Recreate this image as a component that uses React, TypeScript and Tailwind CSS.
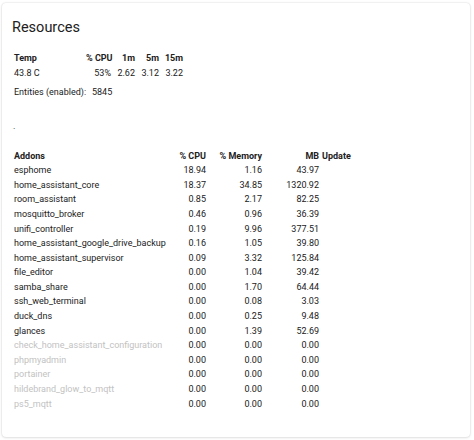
import React from "react";

type Row = { name: string; cpu: string; mem: string; mb: string; off?: boolean };

const rows: Row[] = [
  { name: "esphome", cpu: "18.94", mem: "1.16", mb: "43.97" },
  { name: "home_assistant_core", cpu: "18.37", mem: "34.85", mb: "1320.92" },
  { name: "room_assistant", cpu: "0.85", mem: "2.17", mb: "82.25" },
  { name: "mosquitto_broker", cpu: "0.46", mem: "0.96", mb: "36.39" },
  { name: "unifi_controller", cpu: "0.19", mem: "9.96", mb: "377.51" },
  { name: "home_assistant_google_drive_backup", cpu: "0.16", mem: "1.05", mb: "39.80" },
  { name: "home_assistant_supervisor", cpu: "0.09", mem: "3.32", mb: "125.84" },
  { name: "file_editor", cpu: "0.00", mem: "1.04", mb: "39.42" },
  { name: "samba_share", cpu: "0.00", mem: "1.70", mb: "64.44" },
  { name: "ssh_web_terminal", cpu: "0.00", mem: "0.08", mb: "3.03" },
  { name: "duck_dns", cpu: "0.00", mem: "0.25", mb: "9.48" },
  { name: "glances", cpu: "0.00", mem: "1.39", mb: "52.69" },
  { name: "check_home_assistant_configuration", cpu: "0.00", mem: "0.00", mb: "0.00", off: true },
  { name: "phpmyadmin", cpu: "0.00", mem: "0.00", mb: "0.00", off: true },
  { name: "portainer", cpu: "0.00", mem: "0.00", mb: "0.00", off: true },
  { name: "hildebrand_glow_to_mqtt", cpu: "0.00", mem: "0.00", mb: "0.00", off: true },
  { name: "ps5_mqtt", cpu: "0.00", mem: "0.00", mb: "0.00", off: true },
];

export default function App() {
  return (
    <div
      className="w-[474px] h-[440px] bg-white pl-[2px] pr-[4px] pt-[3px] text-[#212121]"
      style={{ fontFamily: "Roboto, 'Liberation Sans', sans-serif" }}
    >
      <div className="rounded-[4px] bg-white shadow-[0_0_2px_rgba(0,0,0,0.18),0_1px_3px_rgba(0,0,0,0.08)] h-[434px] pt-[15px] px-[12px]">
        <div className="h-[20px] leading-[20px] text-[14.5px] -ml-[2px]">Resources</div>

        <div className="mt-[13.5px] text-[9px] whitespace-nowrap">
          <div className="grid grid-cols-[72px_25px_24px_24px_24px] auto-rows-[15px] items-center">
            <div className="font-bold">Temp</div>
            <div className="font-bold text-right">% CPU</div>
            <div className="font-bold text-right">1m</div>
            <div className="font-bold text-right">5m</div>
            <div className="font-bold text-right">15m</div>
            <div>43.8 C</div>
            <div className="text-right">53%</div>
            <div className="text-right">2.62</div>
            <div className="text-right">3.12</div>
            <div className="text-right">3.22</div>
          </div>
          <div className="mt-[4px] flex h-[15px] items-center">
            <div className="w-[78px]">Entities (enabled):</div>
            <div>5845</div>
          </div>
          <div className="mt-[18px] h-[15px] leading-[15px] -ml-[1px]">.</div>

          <div className="mt-[15.5px] grid grid-cols-[156px_36px_56px_57px_auto] auto-rows-[14.6px] items-center">
            <div className="font-bold">Addons</div>
            <div className="font-bold text-right">% CPU</div>
            <div className="font-bold text-right">% Memory</div>
            <div className="font-bold text-right">MB</div>
            <div className="font-bold pl-[3px]">Update</div>
            {rows.map((r) => (
              <React.Fragment key={r.name}>
                <div className={r.off ? "text-[#c2c2c2]" : ""}>{r.name}</div>
                <div className="text-right">{r.cpu}</div>
                <div className="text-right">{r.mem}</div>
                <div className="text-right">{r.mb}</div>
                <div></div>
              </React.Fragment>
            ))}
          </div>
        </div>
      </div>
    </div>
  );
}
